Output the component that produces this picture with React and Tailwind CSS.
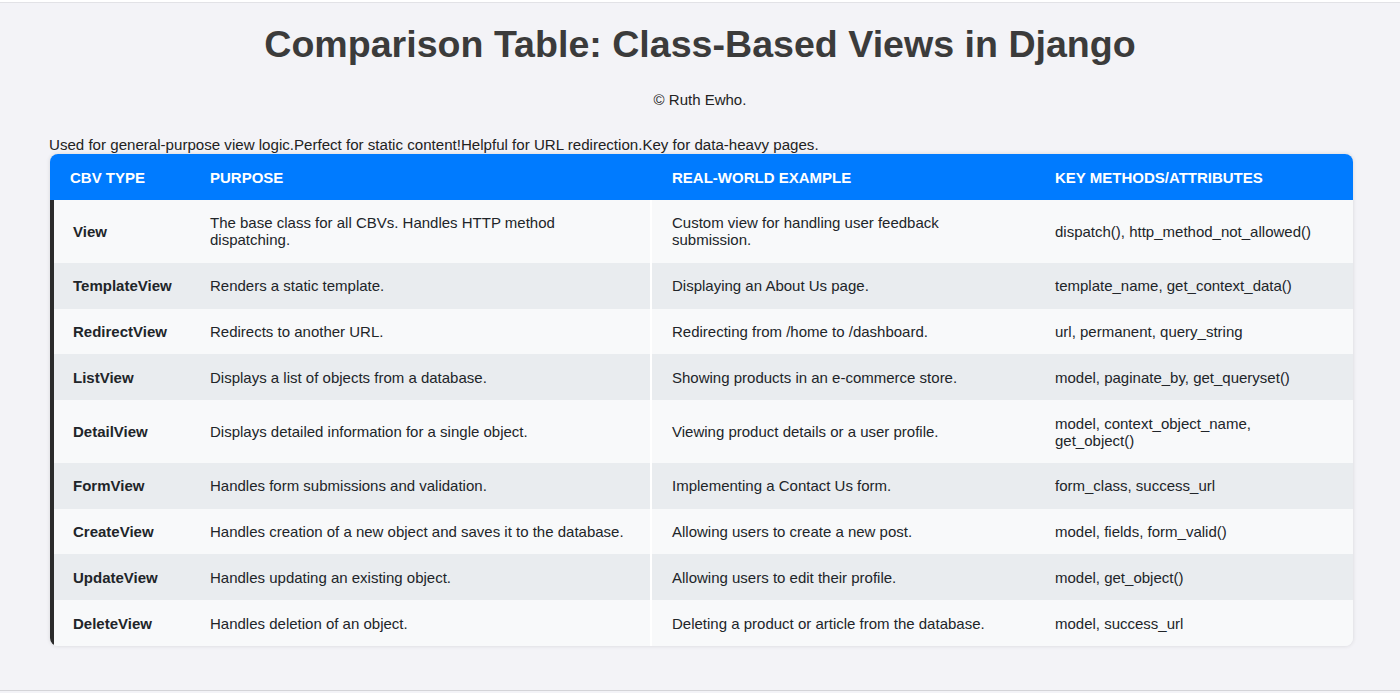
import React from "react";

const rows = [
    ["View", "The base class for all CBVs. Handles HTTP method dispatching.", "Custom view for handling user feedback submission.", "dispatch(), http_method_not_allowed()"],
    ["TemplateView", "Renders a static template.", "Displaying an About Us page.", "template_name, get_context_data()"],
    ["RedirectView", "Redirects to another URL.", "Redirecting from /home to /dashboard.", "url, permanent, query_string"],
    ["ListView", "Displays a list of objects from a database.", "Showing products in an e-commerce store.", "model, paginate_by, get_queryset()"],
    ["DetailView", "Displays detailed information for a single object.", "Viewing product details or a user profile.", "model, context_object_name, get_object()"],
    ["FormView", "Handles form submissions and validation.", "Implementing a Contact Us form.", "form_class, success_url"],
    ["CreateView", "Handles creation of a new object and saves it to the database.", "Allowing users to create a new post.", "model, fields, form_valid()"],
    ["UpdateView", "Handles updating an existing object.", "Allowing users to edit their profile.", "model, get_object()"],
    ["DeleteView", "Handles deletion of an object.", "Deleting a product or article from the database.", "model, success_url"],
];

const App = () => {
    return (
        <div className="w-full h-[693px] bg-[#f3f3f7] font-['Liberation_Sans',Arial,sans-serif] text-[#222] flex flex-col">
            {/* top edge */}
            <div className="h-[3px] bg-white border-b border-[#e2e2e6]"></div>

            <h1 className="mt-[19px] text-center text-[37.6px] leading-[44px] font-bold text-[#3b3b3b]">
                Comparison Table: Class-Based Views in Django
            </h1>
            <p className="mt-[25px] text-center text-[15px] leading-[17px] text-[#222]">© Ruth Ewho.</p>

            <div className="px-[49px] mt-[28px]">
                <p className="text-[15.1px] leading-[17px] text-[#222]">
                    Used for general-purpose view logic.Perfect for static content!Helpful for URL redirection.Key for data-heavy pages.
                </p>

                {/* Table */}
                <div className="mt-[1px] ml-[1px] w-[1303px] rounded-lg overflow-hidden shadow-[0_0_4px_rgba(0,0,0,0.12)] text-[15px] leading-[17px]">
                    <div className="grid grid-cols-[140px_462px_383px_318px] bg-[#007bff] text-white font-bold uppercase">
                        <div className="px-[20px] py-[14.5px]">CBV Type</div>
                        <div className="px-[20px] py-[14.5px]">Purpose</div>
                        <div className="px-[20px] py-[14.5px]">Real-World Example</div>
                        <div className="px-[20px] py-[14.5px]">Key Methods/Attributes</div>
                    </div>
                    {rows.map((r, i) => (
                        <div
                            key={r[0]}
                            className={
                                "grid grid-cols-[140px_462px_383px_318px] items-center text-[#212529] " +
                                (i % 2 === 0 ? "bg-[#f8f9fa]" : "bg-[#e9ecef]")
                            }
                        >
                            <div className="h-full flex items-center border-l-4 border-[#2b2b2b] pl-[19px] pr-[10px] py-[14.4px] font-bold">
                                {r[0]}
                            </div>
                            <div className="h-full flex items-center border-r-2 border-white px-[20px] py-[14.4px]">{r[1]}</div>
                            <div className="px-[20px] py-[14.4px]">{r[2]}</div>
                            <div className="px-[20px] py-[14.4px]">{r[3]}</div>
                        </div>
                    ))}
                </div>
            </div>

            <div className="mt-auto mb-[2px] h-px bg-[#d4d4d8]"></div>
        </div>
    );
};

export default App;
